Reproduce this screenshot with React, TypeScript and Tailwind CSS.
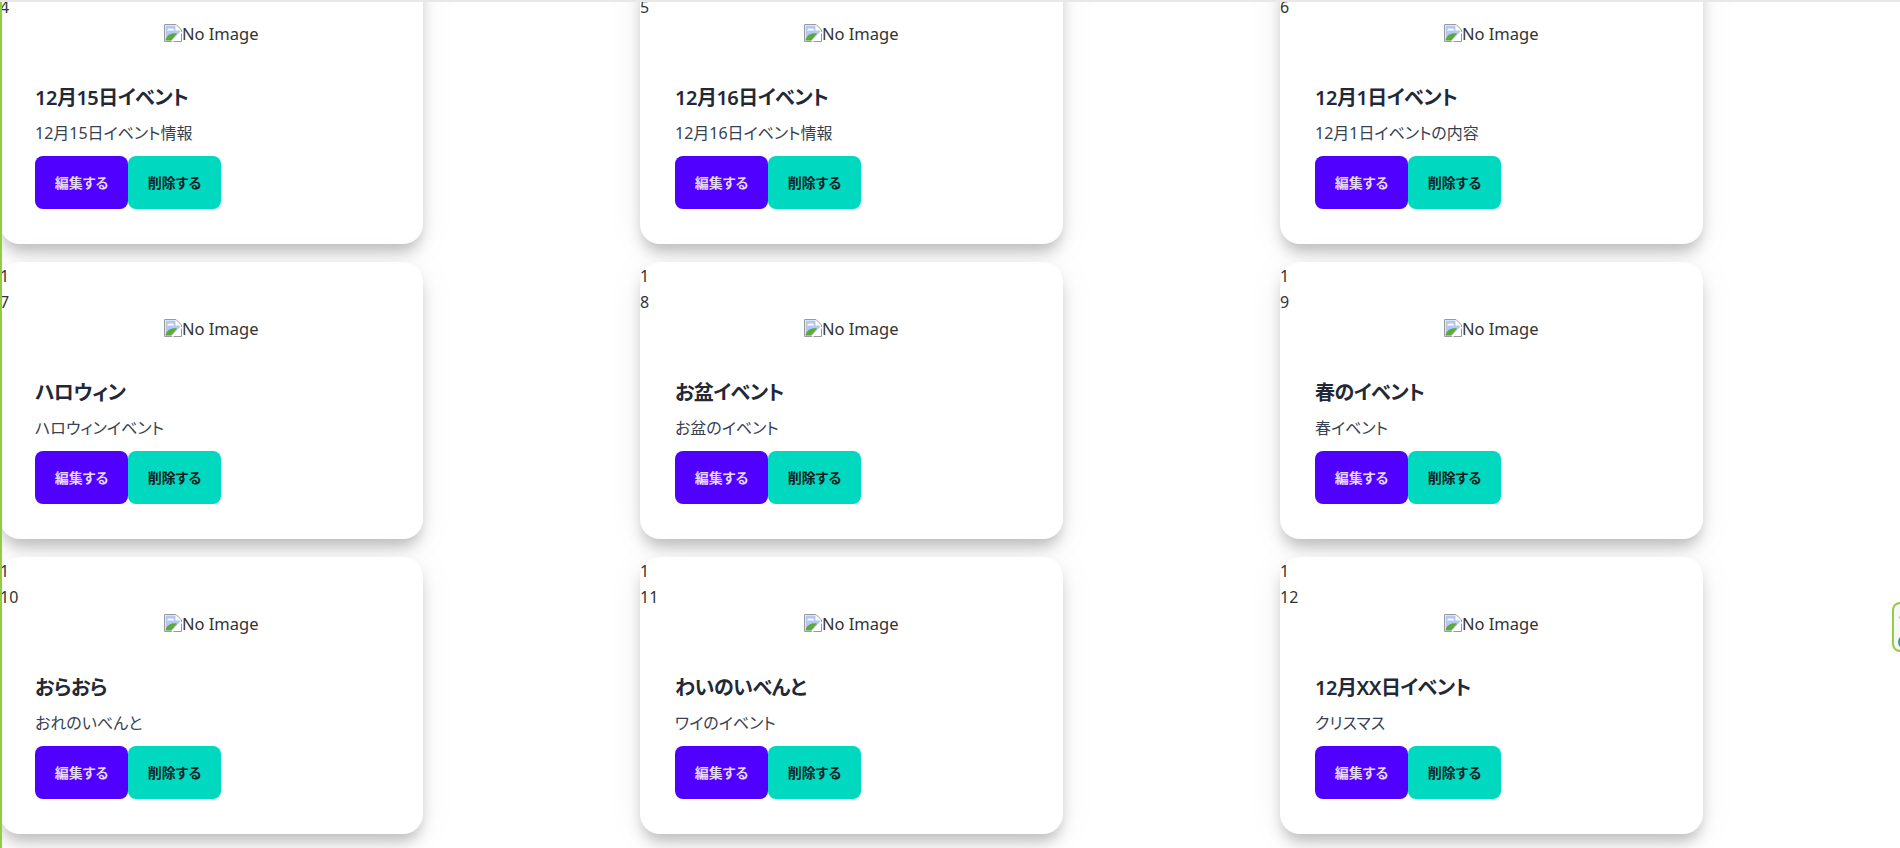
const events = [
  { label: ["1", "4"], title: "12月15日イベント", body: "12月15日イベント情報" },
  { label: ["1", "5"], title: "12月16日イベント", body: "12月16日イベント情報" },
  { label: ["1", "6"], title: "12月1日イベント", body: "12月1日イベントの内容" },
  { label: ["1", "7"], title: "ハロウィン", body: "ハロウィンイベント" },
  { label: ["1", "8"], title: "お盆イベント", body: "お盆のイベント" },
  { label: ["1", "9"], title: "春のイベント", body: "春イベント" },
  { label: ["1", "10"], title: "おらおら", body: "おれのいべんと" },
  { label: ["1", "11"], title: "わいのいべんと", body: "ワイのイベント" },
  { label: ["1", "12"], title: "12月XX日イベント", body: "クリスマス" },
];

// Chrome's broken image placeholder
const BrokenImage = () => (
  <svg width="18" height="18" viewBox="0 0 18 18" className="shrink-0 mb-[4px]">
    <path d="M0.5 0.5H12L17.5 6V17.5H0.5Z" fill="#fff" stroke="#9a9a9a" />
    <path d="M1.500 1.500H11.500V6.500H16.500V9L8 16.500H1.500Z" fill="#b4c9f0" />
    <path d="M3 6.500c1-2.500 3-2.500 4-1.500 1-1 3 0 3 1.500H3Z" fill="#fff" />
    <path d="M1.500 16.500C2.500 11 7.500 8.500 13 9.500L7.500 16.500Z" fill="#5fa83f" />
    <path d="M17.500 8L8 17.500" stroke="#fff" strokeWidth="2" />
  </svg>
);

const EventCard = ({ event }: { event: (typeof events)[number] }) => (
  <div className="relative w-[422.500px] h-[277px] bg-white rounded-[20px] shadow-[0_10px_15px_-3px_rgba(0,0,0,0.25),0_4px_40px_rgba(0,0,0,0.05)]">
    <div className="absolute left-0 top-[1px] text-[#333] leading-[26px]">
      {event.label.map((line, i) => (
        <div key={i}>{line}</div>
      ))}
    </div>
    <div className="h-[117px] pt-[55px] flex justify-center items-start leading-[24px] text-[#333]">
      <div className="flex items-end">
        <BrokenImage />
        <span className="text-[16.500px]">No Image</span>
      </div>
    </div>
    <div className="px-[35px]">
      <h2 className="text-[20px] font-semibold leading-[28px] tracking-[-0.5px] text-[#1f2937]">{event.title}</h2>
      <p className="mt-[9px] leading-[24px] text-[#374151]">{event.body}</p>
      <div className="flex mt-[11px]">
        <button className="w-[93px] h-[53px] rounded-lg bg-[#4f00ff] text-[#e5d9ff] text-sm font-semibold">
          編集する
        </button>
        <button className="w-[93px] h-[53px] rounded-lg bg-[#00d9c0] text-[#10201e] text-sm font-semibold">
          削除する
        </button>
      </div>
    </div>
  </div>
);

export default function App() {
  return (
    <div className="relative h-[848px] overflow-hidden bg-white font-['Noto_Sans','Noto_Sans_CJK_JP',sans-serif] [font-feature-settings:'palt']">
      <div className="mt-[-33px] grid grid-cols-[repeat(3,640px)] gap-y-[18px] w-max">
        {events.map((event) => (
          <EventCard key={event.title} event={event} />
        ))}
      </div>
      <div className="absolute top-0 bottom-0 left-0 w-[2px] bg-[#92cc41]" />
      <div className="absolute top-0 left-0 right-0 h-[2px] bg-[#e8e8e8]" />
      {/* widget peeking in at the right edge */}
      <div className="absolute right-[-10px] top-[602px] w-[18px] h-[50px] rounded-lg border-2 border-[#92cc41] bg-[#f7f7f7]">
        <div className="absolute left-[4px] top-[31px] w-[14px] h-[14px] rounded-full border-[3px] border-[#2a9d9d]" />
        <div className="absolute left-[5px] top-[12px] w-[3px] h-[3px] rounded-full bg-[#bdbdbd]" />
      </div>
    </div>
  );
}
